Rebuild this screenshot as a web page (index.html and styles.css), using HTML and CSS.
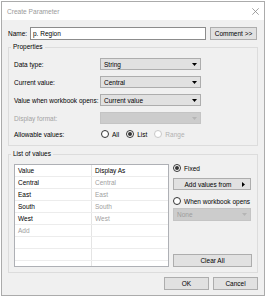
FILE: index.html
```html
<!DOCTYPE html>
<html>
<head>
<meta charset="utf-8">
<link rel="stylesheet" href="styles.css">
</head>
<body>
<div class="dialog">
  <div class="titlebar">
    <span class="title">Create Parameter</span>
    <svg class="close" width="7" height="7" viewBox="0 0 7 7"><path d="M0.3 0.3 L6.7 6.7 M6.7 0.3 L0.3 6.7" stroke="#8a8a8a" stroke-width="0.8" fill="none"/></svg>
  </div>
  <div class="body">
    <div class="name-row">
      <span class="name-label">Name:</span>
      <div class="textbox">p. Region</div>
      <div class="btn comment">Comment &gt;&gt;</div>
    </div>

    <fieldset class="group">
      <legend>Properties</legend>
      <div class="rows">
        <div class="prop-row">
          <span class="prop-label">Data type:</span>
          <div class="combo"><span>String</span><svg class="caret" width="5" height="3" viewBox="0 0 5 3"><polygon points="0,0 5,0 2.5,3" fill="#000"/></svg></div>
        </div>
        <div class="prop-row">
          <span class="prop-label">Current value:</span>
          <div class="combo"><span>Central</span><svg class="caret" width="5" height="3" viewBox="0 0 5 3"><polygon points="0,0 5,0 2.5,3" fill="#000"/></svg></div>
        </div>
        <div class="prop-row">
          <span class="prop-label">Value when workbook opens:</span>
          <div class="combo"><span>Current value</span><svg class="caret" width="5" height="3" viewBox="0 0 5 3"><polygon points="0,0 5,0 2.5,3" fill="#000"/></svg></div>
        </div>
        <div class="prop-row">
          <span class="prop-label disabled">Display format:</span>
          <div class="combo off"><span></span><svg class="caret" width="5" height="3" viewBox="0 0 5 3"><polygon points="0,0 5,0 2.5,3" fill="#b5b5b5"/></svg></div>
        </div>
        <div class="radio-row">
          <span class="prop-label">Allowable values:</span>
          <div class="radios">
            <span class="opt"><span class="radio"></span>All</span>
            <span class="opt"><span class="radio on"></span>List</span>
            <span class="opt disabled"><span class="radio off"></span>Range</span>
          </div>
        </div>
      </div>
    </fieldset>

    <fieldset class="group list-group">
      <legend>List of values</legend>
      <div class="list-wrap">
        <div class="values">
          <div class="vrow"><span class="c1">Value</span><span class="c2 dark">Display As</span></div>
          <div class="vrow"><span class="c1">Central</span><span class="c2">Central</span></div>
          <div class="vrow"><span class="c1">East</span><span class="c2">East</span></div>
          <div class="vrow"><span class="c1">South</span><span class="c2">South</span></div>
          <div class="vrow"><span class="c1">West</span><span class="c2">West</span></div>
          <div class="vrow"><span class="c1 muted">Add</span><span class="c2"></span></div>
          <div class="vrow"><span class="c1"></span><span class="c2"></span></div>
          <div class="vrow"><span class="c1"></span><span class="c2"></span></div>
          <div class="vrow"><span class="c1"></span><span class="c2"></span></div>
        </div>
        <div class="side">
          <span class="opt side-opt"><span class="radio on"></span>Fixed</span>
          <div class="btn add"><span class="add-text">Add values from</span><svg class="tri" width="3" height="5" viewBox="0 0 3 5"><polygon points="0,0 3,2.5 0,5" fill="#000"/></svg></div>
          <span class="opt side-opt when"><span class="radio"></span>When workbook opens</span>
          <div class="combo off none"><span>None</span><svg class="caret" width="5" height="3" viewBox="0 0 5 3"><polygon points="0,0 5,0 2.5,3" fill="#b5b5b5"/></svg></div>
          <div class="btn clear">Clear All</div>
        </div>
      </div>
    </fieldset>

    <div class="actions">
      <div class="btn action">OK</div>
      <div class="btn action">Cancel</div>
    </div>
  </div>
</div>
</body>
</html>
```
FILE: styles.css
```css
html, body {
  margin: 0;
  padding: 0;
  background: #ffffff;
}

.dialog {
  box-sizing: border-box;
  width: 264px;
  height: 295px;
  margin: 1px 0 0 1px;
  border: 1px solid #ababab;
  background: #f0f0f0;
  display: flex;
  flex-direction: column;
  font-family: "Liberation Sans", Arial, sans-serif;
  font-size: 6.5px;
  color: #000;
}

.titlebar {
  height: 18px;
  background: #ffffff;
  display: flex;
  align-items: center;
  justify-content: space-between;
  padding: 0 5px;
}

.title {
  color: #9a9a9a;
  font-size: 6.6px;
}

.close {
  display: block;
}

.body {
  flex: 1;
  display: flex;
  flex-direction: column;
  padding: 7px 6px 5px 6px;
}

.name-row {
  display: flex;
  align-items: center;
  height: 13px;
}

.name-label {
  width: 22px;
}

.textbox {
  box-sizing: border-box;
  width: 176px;
  height: 13px;
  border: 1px solid #8c8c8c;
  background: #ffffff;
  padding-left: 2px;
  line-height: 11px;
}

.btn {
  box-sizing: border-box;
  border: 1px solid #adadad;
  background: #e1e1e1;
  display: flex;
  align-items: center;
  justify-content: center;
}

.comment {
  margin-left: 4px;
  width: 47px;
  height: 13px;
}

.group {
  margin: 3px 0 0 0;
  padding: 7px 0 7px 5px;
  border: 1px solid #dcdcdc;
  min-width: 0;
}

.group legend {
  padding: 0 2px;
  margin-left: -3px;
  line-height: 8px;
  height: 8px;
}

.rows {
  display: flex;
  flex-direction: column;
  gap: 6px;
}

.prop-row {
  display: flex;
  align-items: center;
  height: 12px;
}

.radio-row {
  display: flex;
  align-items: center;
  height: 8px;
}

.prop-label {
  width: 86px;
  flex: none;
}

.disabled {
  color: #a3a3a3;
}

.combo {
  box-sizing: border-box;
  width: 101px;
  height: 12px;
  border: 1px solid #adadad;
  background: #e1e1e1;
  display: flex;
  align-items: center;
  justify-content: space-between;
  padding: 0 3px 0 3px;
}

.combo.off {
  background: #cccccc;
  border-color: #c4c4c4;
  color: #9c9c9c;
}

.caret, .tri {
  display: block;
  flex: none;
}

.radios {
  display: flex;
  align-items: center;
  gap: 7px;
  padding-left: 1px;
}

.opt {
  display: flex;
  align-items: center;
  gap: 3px;
}

.radio {
  box-sizing: border-box;
  width: 8px;
  height: 8px;
  border: 1px solid #333333;
  border-radius: 50%;
  background: #ffffff;
  display: flex;
  align-items: center;
  justify-content: center;
}

.radio.on::after {
  content: "";
  width: 4px;
  height: 4px;
  border-radius: 50%;
  background: #333333;
}

.radio.off {
  border-color: #c8c8c8;
}

.opt.disabled {
  color: #b0b0b0;
}

.list-group {
  margin-top: 4px;
  padding: 6px 0 5px 5px;
}

.list-wrap {
  display: flex;
  gap: 4px;
}

.values {
  box-sizing: border-box;
  width: 155px;
  height: 103px;
  border: 1px solid #aeb0b5;
  background: #ffffff;
  overflow: hidden;
}

.vrow {
  box-sizing: border-box;
  display: grid;
  grid-template-columns: 77px 1fr;
  height: 12px;
  border-bottom: 1px solid #ececec;
}

.vrow span {
  line-height: 11px;
  padding-left: 3px;
}

.c1 {
  border-right: 1px solid #e4e4e4;
}

.c2 {
  color: #a0a0a0;
}

.c2.dark {
  color: #000;
}

.muted {
  color: #a0a0a0;
}

.side {
  width: 78px;
  display: flex;
  flex-direction: column;
  height: 103px;
}

.side-opt {
  height: 8px;
}

.add {
  margin-top: 6px;
  height: 12px;
  padding: 0 5px 0 0;
}

.add-text {
  flex: 1;
  text-align: center;
}

.when {
  margin-top: 7px;
}

.combo.none {
  width: 78px;
  height: 13px;
  margin-top: 3px;
}

.clear {
  margin-top: auto;
  height: 13px;
  width: 79px;
}

.actions {
  display: flex;
  justify-content: flex-end;
  gap: 4px;
  margin-top: 4px;
}

.action {
  width: 45px;
  height: 13px;
}
```
